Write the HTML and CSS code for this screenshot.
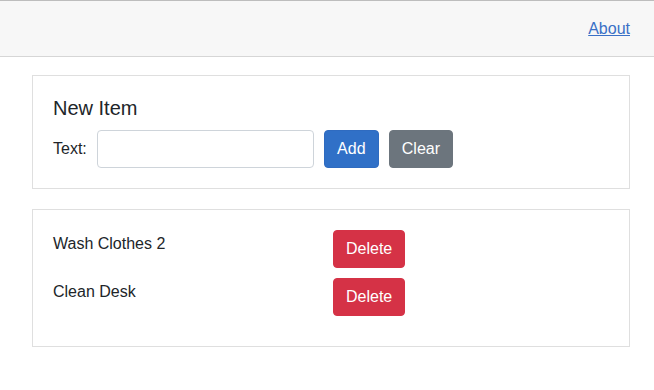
FILE: index.html
```html
<!DOCTYPE html>
<html>
<head>
<meta charset="utf-8">
<link rel="stylesheet" href="styles.css">
</head>
<body>
<header class="navbar">
  <a class="nav-link" href="#">About</a>
</header>
<main class="container">
  <section class="card">
    <h5 class="card-title">New Item</h5>
    <div class="form-row">
      <label class="form-label">Text:</label>
      <input class="form-input" type="text">
      <button class="btn btn-primary">Add</button>
      <button class="btn btn-secondary">Clear</button>
    </div>
  </section>
  <section class="card">
    <div class="item-row">
      <span class="item-text">Wash Clothes 2</span>
      <button class="btn btn-danger">Delete</button>
    </div>
    <div class="item-row">
      <span class="item-text">Clean Desk</span>
      <button class="btn btn-danger">Delete</button>
    </div>
  </section>
</main>
</body>
</html>
```
FILE: styles.css
```css
* { box-sizing: border-box; }
html, body { margin: 0; padding: 0; background: #fff; }
body {
  font-family: "Liberation Sans", Arial, sans-serif;
  font-size: 16px;
  line-height: 1.5;
  color: #212529;
}
.navbar {
  height: 57px;
  background: #f7f7f7;
  border-top: 1px solid #bdbdbd;
  border-bottom: 1px solid #d6d6d6;
  display: flex;
  justify-content: flex-end;
  align-items: center;
  padding: 0 24px 0 0;
}
.nav-link {
  color: #3a70c6;
  text-decoration: underline;
  font-size: 16px;
  line-height: 24px;
}
.container {
  padding: 18px 24px 0 32px;
  display: flex;
  flex-direction: column;
  gap: 20px;
}
.card {
  border: 1px solid #dfdfdf;
  padding: 20px;
}
.card-title {
  margin: 0 0 10px 0;
  font-size: 20px;
  font-weight: 400;
  line-height: 24px;
}
.form-row {
  display: flex;
  align-items: center;
  gap: 10px;
}
.form-input {
  width: 217px;
  height: 38px;
  border: 1px solid #ced4da;
  border-radius: 4px;
  font: inherit;
  padding: 6px 12px;
}
.btn {
  font-family: inherit;
  font-size: 16px;
  line-height: 24px;
  padding: 6px 12px;
  border: 1px solid transparent;
  border-radius: 4px;
  color: #fff;
  cursor: pointer;
}
.btn-primary { background: #3070c7; border-color: #2f6bc0; min-width: 55px; }
.btn-secondary { background: #6c757d; border-color: #6c757d; min-width: 64px; }
.btn-danger { background: #d53246; border-color: #d53246; min-width: 72px; }
.item-row {
  display: grid;
  grid-template-columns: 280px auto;
  justify-content: start;
  align-items: start;
  margin-bottom: 10px;
}
.item-text { line-height: 24px; padding-top: 2px; }
```
